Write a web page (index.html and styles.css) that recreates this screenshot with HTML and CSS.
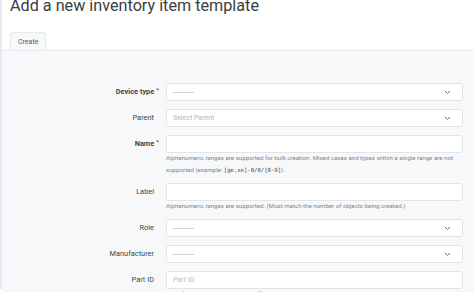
FILE: index.html
```html
<!DOCTYPE html>
<html lang="en">
<head>
  <meta charset="UTF-8">
  <title>Add a new inventory item template</title>
  <link rel="stylesheet" href="styles.css">
</head>
<body>
  <div class="page">
    <div class="header">
      <h1>Add a new inventory item template</h1>
      <ul class="tabs">
        <li class="tab active">Create</li>
      </ul>
    </div>

    <div class="content">
      <form class="form">
        <div class="row">
          <label class="req">Device type<sup>*</sup></label>
          <div class="field">
            <div class="select"><span class="dash">---------</span>
              <svg class="chev" width="7" height="5" viewBox="0 0 7 5"><polyline points="1,1 3.5,3.5 6,1" /></svg>
            </div>
          </div>
        </div>

        <div class="row">
          <label>Parent</label>
          <div class="field">
            <div class="select placeholder">Select Parent
              <svg class="chev" width="7" height="5" viewBox="0 0 7 5"><polyline points="1,1 3.5,3.5 6,1" /></svg>
            </div>
          </div>
        </div>

        <div class="row">
          <label class="req">Name<sup>*</sup></label>
          <div class="field">
            <div class="input"></div>
            <div class="help">Alphanumeric ranges are supported for bulk creation. Mixed cases and types within a single range are not supported (example: <code>[ge,xe]-0/0/[0-9]</code>).</div>
          </div>
        </div>

        <div class="row">
          <label>Label</label>
          <div class="field">
            <div class="input"></div>
            <div class="help">Alphanumeric ranges are supported. (Must match the number of objects being created.)</div>
          </div>
        </div>

        <div class="row">
          <label>Role</label>
          <div class="field">
            <div class="select"><span class="dash">---------</span>
              <svg class="chev" width="7" height="5" viewBox="0 0 7 5"><polyline points="1,1 3.5,3.5 6,1" /></svg>
            </div>
          </div>
        </div>

        <div class="row">
          <label>Manufacturer</label>
          <div class="field">
            <div class="select"><span class="dash">---------</span>
              <svg class="chev" width="7" height="5" viewBox="0 0 7 5"><polyline points="1,1 3.5,3.5 6,1" /></svg>
            </div>
          </div>
        </div>

        <div class="row">
          <label>Part ID</label>
          <div class="field">
            <div class="input placeholder">Part ID</div>
            <div class="help">Manufacturer-assigned part identifier</div>
          </div>
        </div>
      </form>
    </div>
  </div>
</body>
</html>
```

FILE: styles.css
```css
* {
  margin: 0;
  padding: 0;
  box-sizing: border-box;
}

body {
  font-family: Roboto, sans-serif;
  color: #3a3f44;
  background: #fff;
  height: 292px;
  overflow: hidden;
}

.page {
  border-left: 2px solid #e6e9ed;
  height: 100%;
}

.header {
  background: #fff;
  padding: 0 0 0 8px;
}

.header h1 {
  font-weight: 400;
  font-size: 16.2px;
  line-height: 18px;
  margin-top: -3px;
  color: #393d41;
}

.tabs {
  list-style: none;
  display: flex;
  margin-top: 17px;
}

.tab {
  font-size: 7px;
  line-height: 18px;
  color: #555b61;
  padding: 0 7px;
  border: 1px solid #e5e8ec;
  border-bottom: none;
  border-radius: 3px 3px 0 0;
  background: #f7f8fa;
  height: 18px;
}

.content {
  background: #f7f8fa;
  border-top: 1px solid #e5e8ec;
  height: 100%;
  padding-top: 32px;
}

.form {
  display: flex;
  flex-direction: column;
  gap: 8px;
}

.row {
  display: flex;
  align-items: flex-start;
}

.row label {
  width: 164px;
  height: 18px;
  text-align: right;
  font-size: 7.4px;
  line-height: 18px;
  color: #40464c;
  padding-right: 12px;
}

.row label.req {
  font-weight: 700;
}

.row label sup {
  font-size: 6px;
  line-height: 0;
  vertical-align: 2px;
  margin-left: 2px;
  margin-right: -5px;
}

.field {
  width: 297px;
}

.select, .input {
  height: 18px;
  background: #fff;
  border: 1px solid #e1e4e8;
  border-radius: 3px;
  font-size: 7px;
  line-height: 16px;
  padding: 0 6px;
  color: #555;
  position: relative;
}

.dash {
  letter-spacing: 0.7px;
  font-size: 6px;
}

.placeholder {
  color: #b4b9be;
}

.chev {
  position: absolute;
  right: 11px;
  top: 6px;
  fill: none;
  stroke: #6c7177;
  stroke-width: 1;
}

.help {
  font-size: 6.15px;
  line-height: 12px;
  color: #80868c;
  margin-top: -1px;
  margin-bottom: -1px;
}

.help code {
  font-family: 'DejaVu Sans Mono', monospace;
  font-size: 5.6px;
  line-height: 12px;
  vertical-align: top;
  color: #3a3f44;
}
```
